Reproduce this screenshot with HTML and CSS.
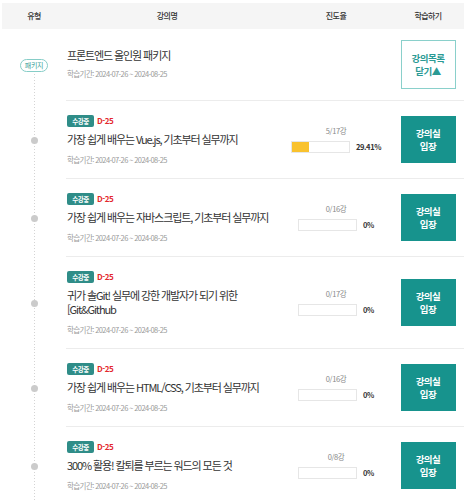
FILE: index.html
```html
<!DOCTYPE html>
<html lang="ko">
<head>
<meta charset="utf-8">
<title>강의 목록</title>
<link rel="stylesheet" href="styles.css">
</head>
<body>
<div class="table">
  <div class="thead">
    <div class="th c-type">유형</div>
    <div class="th c-title">강의명</div>
    <div class="th c-prog">진도율</div>
    <div class="th c-act">학습하기</div>
  </div>

  <div class="row row-pkg">
    <div class="type first"><span class="pkg">패키지</span></div>
    <div class="body">
      <div class="info info-pkg">
        <div class="title">프론트엔드 올인원 패키지</div>
        <div class="date date-pkg">학습기간: 2024-07-26 ~ 2024-08-25</div>
      </div>
      <div class="prog"></div>
      <div class="act"><div class="close-btn">강의목록<br>닫기▲</div></div>
    </div>
  </div>

  <div class="row">
    <div class="type"><span class="dot"></span></div>
    <div class="body">
      <div class="info">
        <div class="tags"><span class="status">수강중</span><span class="dday">D-25</span></div>
        <div class="title">가장 쉽게 배우는 Vue.js, 기초부터 실무까지</div>
        <div class="date">학습기간: 2024-07-26 ~ 2024-08-25</div>
      </div>
      <div class="prog">
        <div class="count">5/17강</div>
        <div class="bar-row"><div class="bar"><div class="fill" style="width:29.41%"></div></div><span class="pct">29.41%</span></div>
      </div>
      <div class="act"><div class="enter">강의실<br>입장</div></div>
    </div>
  </div>

  <div class="row">
    <div class="type"><span class="dot"></span></div>
    <div class="body">
      <div class="info">
        <div class="tags"><span class="status">수강중</span><span class="dday">D-25</span></div>
        <div class="title">가장 쉽게 배우는 자바스크립트, 기초부터 실무까지</div>
        <div class="date">학습기간: 2024-07-26 ~ 2024-08-25</div>
      </div>
      <div class="prog">
        <div class="count">0/16강</div>
        <div class="bar-row"><div class="bar"><div class="fill" style="width:0%"></div></div><span class="pct">0%</span></div>
      </div>
      <div class="act"><div class="enter">강의실<br>입장</div></div>
    </div>
  </div>

  <div class="row">
    <div class="type"><span class="dot"></span></div>
    <div class="body">
      <div class="info">
        <div class="tags"><span class="status">수강중</span><span class="dday">D-25</span></div>
        <div class="title">귀가 솔Git! 실무에 강한 개발자가 되기 위한 [Git&amp;Github</div>
        <div class="date">학습기간: 2024-07-26 ~ 2024-08-25</div>
      </div>
      <div class="prog">
        <div class="count">0/17강</div>
        <div class="bar-row"><div class="bar"><div class="fill" style="width:0%"></div></div><span class="pct">0%</span></div>
      </div>
      <div class="act"><div class="enter">강의실<br>입장</div></div>
    </div>
  </div>

  <div class="row">
    <div class="type"><span class="dot"></span></div>
    <div class="body">
      <div class="info">
        <div class="tags"><span class="status">수강중</span><span class="dday">D-25</span></div>
        <div class="title">가장 쉽게 배우는 HTML/CSS, 기초부터 실무까지</div>
        <div class="date">학습기간: 2024-07-26 ~ 2024-08-25</div>
      </div>
      <div class="prog">
        <div class="count">0/16강</div>
        <div class="bar-row"><div class="bar"><div class="fill" style="width:0%"></div></div><span class="pct">0%</span></div>
      </div>
      <div class="act"><div class="enter">강의실<br>입장</div></div>
    </div>
  </div>

  <div class="row">
    <div class="type"><span class="dot"></span></div>
    <div class="body">
      <div class="info">
        <div class="tags"><span class="status">수강중</span><span class="dday">D-25</span></div>
        <div class="title">300% 활용! 칼퇴를 부르는 워드의 모든 것</div>
        <div class="date">학습기간: 2024-07-26 ~ 2024-08-25</div>
      </div>
      <div class="prog">
        <div class="count">0/8강</div>
        <div class="bar-row"><div class="bar"><div class="fill" style="width:0%"></div></div><span class="pct">0%</span></div>
      </div>
      <div class="act"><div class="enter">강의실<br>입장</div></div>
    </div>
  </div>
</div>
</body>
</html>
```

FILE: styles.css
```css
html, body {
  margin: 0;
  padding: 0;
  background: #fff;
}

body {
  font-family: "Noto Sans CJK KR", "Noto Sans", sans-serif;
  color: #333;
}

.table {
  width: 462px;
  margin: 3px 0 0 2px;
}

.thead {
  display: flex;
  height: 26px;
  align-items: center;
  background: #f5f5f5;
  font-size: 8px;
  line-height: 10px;
  letter-spacing: -0.6px;
  color: #333;
  font-weight: 500;
}

.th {
  text-align: center;
  box-sizing: border-box;
}

.c-type { width: 64px; }
.c-title { width: 214px; padding-right: 12px; }
.c-prog { width: 112px; }
.c-act { width: 72px; }

.row {
  display: flex;
}

.type {
  width: 64px;
  flex: none;
  display: flex;
  align-items: center;
  justify-content: center;
  background-image: linear-gradient(to bottom, #d4d4d4 50%, rgba(255,255,255,0) 50%);
  background-size: 1px 3px;
  background-repeat: repeat-y;
  background-position: 32px 0;
}

.type.first {
  background-image: linear-gradient(#fff, #fff), linear-gradient(to bottom, #d4d4d4 50%, rgba(255,255,255,0) 50%);
  background-size: 100% 50%, 1px 3px;
  background-repeat: no-repeat, repeat-y;
  background-position: 0 0, 32px 0;
}

.pkg {
  display: block;
  height: 11px;
  line-height: 11px;
  padding: 0 4px;
  border: 1px solid #86cdc7;
  border-radius: 7px;
  background: #fff;
  color: #3c9f99;
  font-size: 7px;
  letter-spacing: -0.3px;
}

.dot {
  width: 7px;
  height: 7px;
  border-radius: 50%;
  background: #cbcbcb;
}

.body {
  flex: 1;
  display: flex;
  align-items: center;
  border-bottom: 1px solid #ececec;
}

.row-pkg .body {
  height: 71px;
}

.info {
  width: 214px;
  flex: none;
  box-sizing: border-box;
  padding: 14px 3px 11px 1px;
}

.info-pkg {
  padding-top: 0;
  padding-bottom: 0;
}

.tags {
  display: flex;
  align-items: center;
  height: 12px;
  line-height: 12px;
}

.status {
  display: block;
  width: 27px;
  height: 12px;
  line-height: 12px;
  text-align: center;
  background: #2f8d88;
  color: #fff;
  font-size: 6.5px;
  font-weight: 700;
  letter-spacing: -0.4px;
  border-radius: 2px;
}

.dday {
  margin-left: 3px;
  color: #e3262b;
  font-size: 8px;
  font-weight: 700;
  letter-spacing: -0.5px;
}

.title {
  margin-top: 5px;
  font-size: 11px;
  line-height: 14px;
  letter-spacing: -1.1px;
  color: #333;
}

.info-pkg .title {
  margin-top: 0;
}

.date {
  margin-top: 7px;
  font-size: 7.5px;
  line-height: 14px;
  letter-spacing: -0.6px;
  color: #9a9a9a;
}

.date-pkg {
  margin-top: 5px;
}

.prog {
  width: 112px;
  flex: none;
  display: flex;
  flex-direction: column;
  align-items: center;
}

.count {
  font-size: 7.5px;
  line-height: 10px;
  letter-spacing: -0.4px;
  color: #888;
}

.bar-row {
  display: flex;
  align-items: center;
  margin-top: 5px;
}

.bar {
  width: 57px;
  height: 10px;
  border: 1px solid #e6e6e6;
  background: #fff;
}

.fill {
  height: 100%;
  background: #f9c22e;
}

.pct {
  margin-left: 6px;
  font-size: 7.5px;
  line-height: 10px;
  font-weight: 700;
  letter-spacing: -0.4px;
  color: #333;
}

.act {
  width: 72px;
  flex: none;
  display: flex;
  justify-content: center;
}

.enter,
.close-btn {
  width: 55px;
  height: 47px;
  box-sizing: border-box;
  display: flex;
  align-items: center;
  justify-content: center;
  text-align: center;
  font-size: 9.5px;
  line-height: 13px;
  font-weight: 700;
  letter-spacing: -0.5px;
}

.enter {
  background: #17938d;
  color: #fff;
}

.close-btn {
  height: 49px;
  border: 1px solid #8ad0cb;
  background: #fff;
  color: #2a9a94;
}
```
